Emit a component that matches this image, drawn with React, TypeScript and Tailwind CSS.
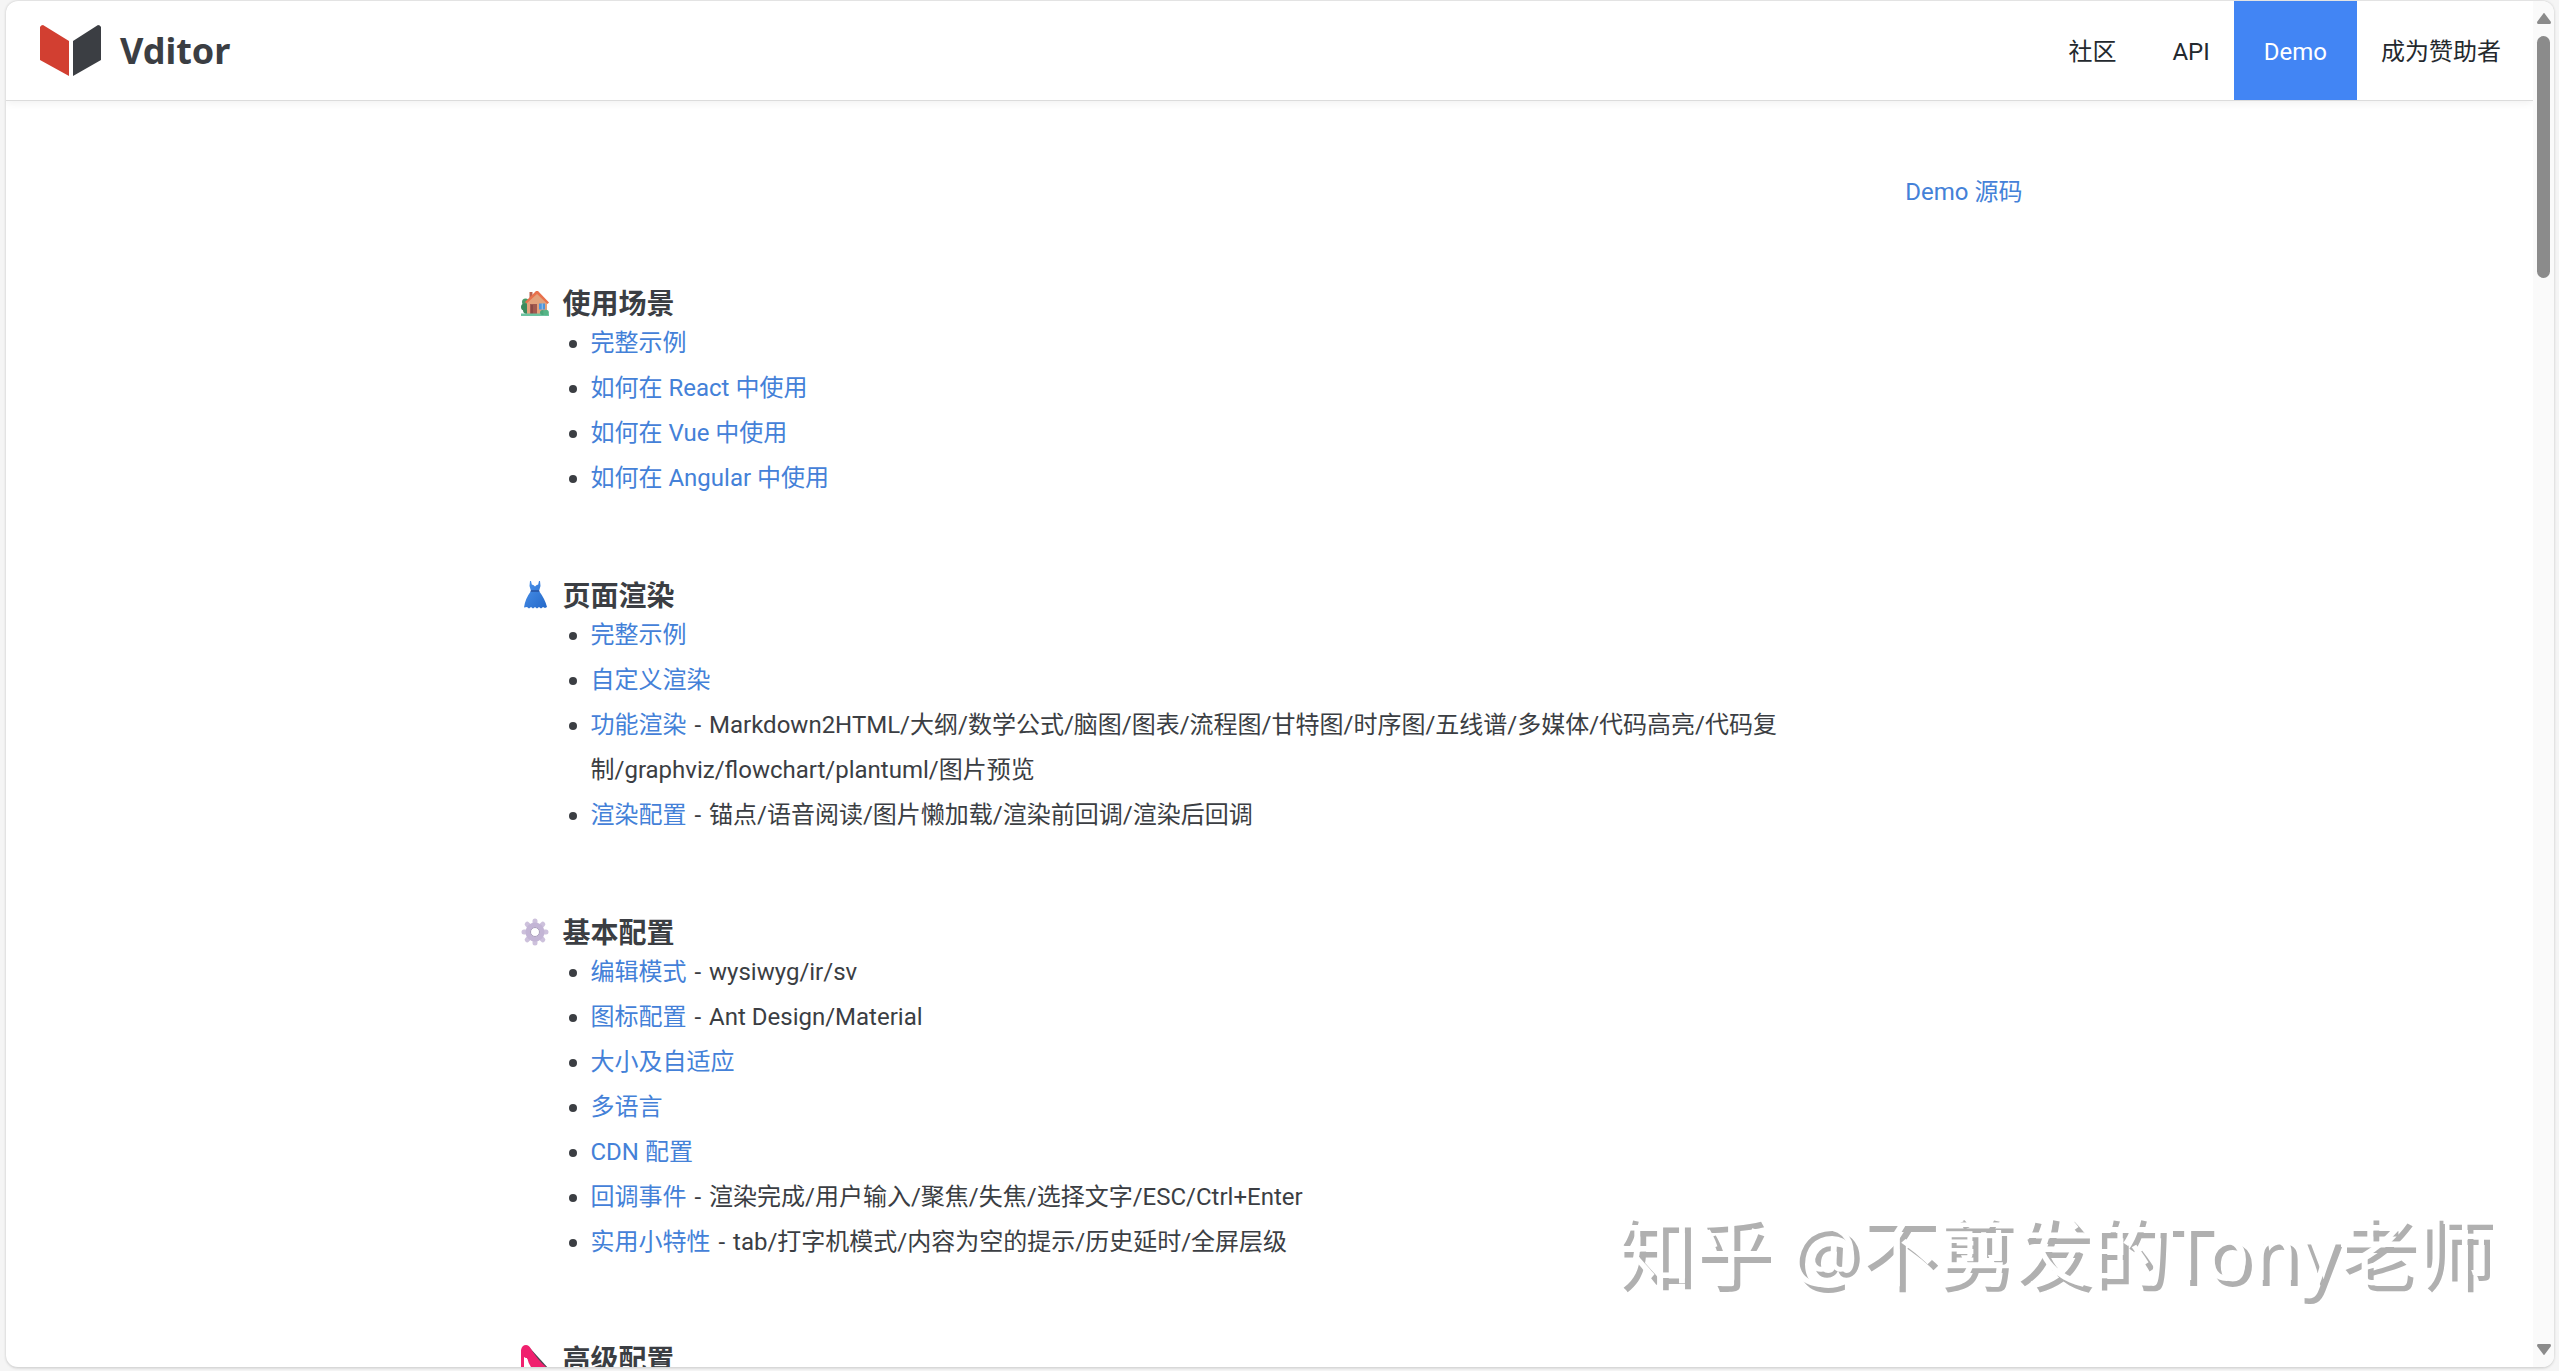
import React from "react";

type Item = { link: string; note?: string };
type SectionData = { icon: React.ReactNode; title: string; items: Item[] };

const HouseIcon = () => (
  <svg viewBox="0 0 28 28" className="w-7 h-7" aria-hidden="true">
    <circle cx="4.5" cy="13" r="3.5" fill="#4a9a68" />
    <circle cx="3.5" cy="18" r="3.5" fill="#3b8a5c" />
    <circle cx="6" cy="21" r="4" fill="#3b8a5c" />
    <path d="M8.500 3h3v6h-3z" fill="#b9624f" />
    <path d="M6 12 15.500 4 26 13v12H6z" fill="#e3a27c" />
    <path d="M9 15h7v10H9z" fill="#a2594f" />
    <path d="M10 16h2v9h-2z" fill="#8a4a44" />
    <path d="M18 14.500h6v6h-6z" fill="#4f95dc" />
    <path d="M20.800 14.500h.8v6h-.8z" fill="#a9d2f2" />
    <path d="M4 13 15 2h2l11 11.500-1.500 1.500L16 5 5.500 14.500z" fill="#e8714c" />
    <path d="M0 24.500h28V27H0z" fill="#6cc3a0" />
    <circle cx="21.500" cy="23.500" r="2.500" fill="#4aa77a" />
    <circle cx="25" cy="23.500" r="2.800" fill="#55b486" />
  </svg>
);

const DressIcon = () => (
  <svg viewBox="0 0 28 28" className="w-7 h-7" aria-hidden="true">
    <defs>
      <linearGradient id="dress" x1="0" y1="0" x2="1" y2="1">
        <stop offset="0" stopColor="#4b93ec" />
        <stop offset="1" stopColor="#2468c8" />
      </linearGradient>
    </defs>
    <path
      d="M9 0h1l.8 3.500Q13 4 14 5.500 15 4 17.200 3.500L18 0h1l.5 5-1.500 5q6 8 8 16l-2 1-2-1-2 1.500-2-1.500-2 1.500-2-1.500-2 1.500-2-1.500-2 1.500-2-1.500-3 .5Q4 18 10 10L8.500 5z"
      fill="url(#dress)"
    />
    <path d="M10 9h8l.5 2h-9z" fill="#2a5cae" />
  </svg>
);

const GearIcon = () => (
  <svg viewBox="0 0 28 28" className="w-7 h-7" aria-hidden="true">
    <path
      d="M14 3v4M14 21v4M3 14h4M21 14h4M6.200 6.200l3 3M18.800 18.800l3 3M21.800 6.200l-3 3M9.200 18.800l-3 3"
      fill="none"
      stroke="#cdc1dc"
      strokeWidth="5"
      strokeLinecap="round"
    />
    <circle cx="14" cy="14" r="7" fill="none" stroke="#c3b5d5" strokeWidth="5" />
    <circle cx="14" cy="14" r="4.500" fill="#fff" stroke="#a99dbb" strokeWidth="1" />
  </svg>
);

const HeelIcon = () => (
  <svg viewBox="0 0 28 28" className="w-7 h-7" aria-hidden="true">
    <path d="M8 2 28 24l-1 3-6-4z" fill="#4a4650" />
    <path d="M0 5Q1 0 5 0q3 0 5 4 6 10 15 18 3 3 3 6H16Q8 22 6.500 14L3 12v16H0z" fill="#f0206e" />
    <path d="M3 13h3v15H3z" fill="#fff" />
  </svg>
);

const Logo = () => (
  <svg viewBox="0 0 62 52" className="w-[62px] h-[52px]" aria-hidden="true">
    <path d="M0 2Q1 0 3 0L29 16V51L0 35z" fill="#d23f31" />
    <path d="M61 2Q60 0 58 0L33 16V51L61 35z" fill="#3b3e43" />
  </svg>
);

const sections: SectionData[] = [
  {
    icon: <HouseIcon />,
    title: "使用场景",
    items: [
      { link: "完整示例" },
      { link: "如何在 React 中使用" },
      { link: "如何在 Vue 中使用" },
      { link: "如何在 Angular 中使用" },
    ],
  },
  {
    icon: <DressIcon />,
    title: "页面渲染",
    items: [
      { link: "完整示例" },
      { link: "自定义渲染" },
      {
        link: "功能渲染",
        note: "Markdown2HTML/大纲/数学公式/脑图/图表/流程图/甘特图/时序图/五线谱/多媒体/代码高亮/代码复制/graphviz/flowchart/plantuml/图片预览",
      },
      { link: "渲染配置", note: "锚点/语音阅读/图片懒加载/渲染前回调/渲染后回调" },
    ],
  },
  {
    icon: <GearIcon />,
    title: "基本配置",
    items: [
      { link: "编辑模式", note: "wysiwyg/ir/sv" },
      { link: "图标配置", note: "Ant Design/Material" },
      { link: "大小及自适应" },
      { link: "多语言" },
      { link: "CDN 配置" },
      { link: "回调事件", note: "渲染完成/用户输入/聚焦/失焦/选择文字/ESC/Ctrl+Enter" },
      { link: "实用小特性", note: "tab/打字机模式/内容为空的提示/历史延时/全屏层级" },
    ],
  },
  { icon: <HeelIcon />, title: "高级配置", items: [] },
];

function Header() {
  return (
    <header className="flex h-[100px] shrink-0 items-stretch justify-between border-b border-[#dcdcdc] pl-[34px] shadow-[0_2px_8px_rgba(0,0,0,0.06)]">
      <a href="#home" className="flex items-center gap-[18px] font-['Noto_Sans',sans-serif] text-4xl font-bold text-[#3b3e43]">
        <Logo />
        Vditor
      </a>
      <nav className="flex items-stretch pr-2 text-2xl text-[#24292e]">
        <a href="#community" className="flex items-center px-6 pt-0.5">社区</a>
        <a href="#api" className="flex items-center pt-0.5 pr-6 pl-8">API</a>
        <a href="#demo" className="flex items-center bg-[#4285f4] px-[30px] pt-0.5 text-white">Demo</a>
        <a href="#sponsor" className="flex items-center px-6 pt-0.5">成为赞助者</a>
      </nav>
    </header>
  );
}

function Section({ icon, title, items }: SectionData) {
  return (
    <section className="mb-[76px]">
      <h2 className="flex h-9 items-center gap-[14px] font-['Noto_Sans','Noto_Sans_CJK_SC',sans-serif] text-[28px] font-bold">
        {icon}
        {title}
      </h2>
      <ul className="pl-12 text-2xl leading-[45px]">
        {items.map((item) => (
          <li
            key={item.link}
            className="flex before:mt-[19px] before:mr-[14px] before:size-2 before:shrink-0 before:rounded-full before:bg-current before:content-['']"
          >
            <p className="min-w-0">
              <a href="#demo" className="text-[#4481d8]">{item.link}</a>
              {item.note && (
                <>
                  <span className="mx-0.5"> - </span>
                  {item.note}
                </>
              )}
            </p>
          </li>
        ))}
      </ul>
    </section>
  );
}

function ScrollBar() {
  return (
    <div className="flex w-[21px] shrink-0 flex-col items-center bg-[#fafafa] pt-3 pb-3" aria-hidden="true">
      <svg viewBox="0 0 14 11" className="w-3.5 h-[11px]">
        <path d="M6 1q1-2 2 0l6 8q0 2-1 2H1q-1 0-1-2z" fill="#8b8b8b" />
      </svg>
      <div className="mt-3 h-[242px] w-[13px] rounded-full bg-[#8b8b8b]" />
      <svg viewBox="0 0 14 11" className="mt-auto w-3.5 h-[11px]">
        <path d="M6 10q1 2 2 0l6-8q0-2-1-2H1Q0 0 0 2z" fill="#8b8b8b" />
      </svg>
    </div>
  );
}

function App() {
  return (
    <div className="h-screen overflow-hidden bg-[#f5f5f5] pt-px pr-[5px] pb-[3px] pl-1.5 font-['Roboto','Noto_Sans_CJK_SC',sans-serif] text-[#3b3e43]">
      <div className="relative flex h-full overflow-hidden rounded-xl border-b border-[#d8d8d8] bg-white shadow-[0_0_3px_rgba(0,0,0,0.2)]">
        <div className="flex min-w-0 flex-1 flex-col">
          <Header />
          <main className="mx-auto w-full max-w-[1506px] flex-1 overflow-hidden pt-[68px] pl-1">
            <div className="mb-[70px] text-right text-2xl leading-[46px]">
              <a href="#source" className="text-[#4481d8]">Demo 源码</a>
            </div>
            <div className="w-[84%]">
              {sections.map((section) => (
                <Section key={section.title} {...section} />
              ))}
            </div>
          </main>
        </div>
        <ScrollBar />
        <div className="pointer-events-none absolute right-[63px] bottom-[78px] font-['Noto_Sans','Noto_Sans_CJK_SC',sans-serif] text-[77px] leading-none whitespace-nowrap text-white [text-shadow:6px_6px_0_#b0b0b0]">
          知乎 @不剪发的Tony老师
        </div>
      </div>
    </div>
  );
}

export default App;
